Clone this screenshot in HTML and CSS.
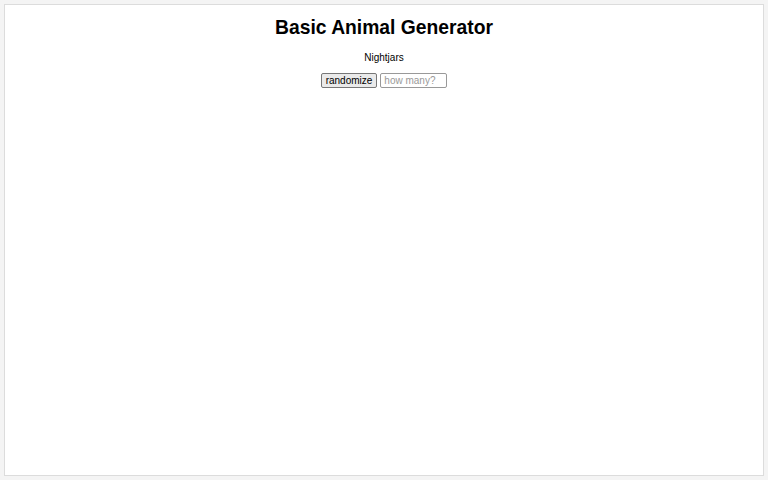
FILE: index.html
```html
<!DOCTYPE html>
<html>
<head>
<meta charset="utf-8">
<link rel="stylesheet" href="styles.css">
</head>
<body>
<div class="frame">
  <h1 class="title">Basic Animal Generator</h1>
  <p class="animal">Nightjars</p>
  <div class="controls">
    <button class="btn">randomize</button>
    <input class="count" type="text" placeholder="how many?">
  </div>
</div>
</body>
</html>
```

FILE: styles.css
```css
html, body {
  margin: 0;
  padding: 0;
}
body {
  background: #f4f4f4;
  padding: 4px;
  font-family: "Liberation Sans", Arial, sans-serif;
}
.frame {
  background: #fff;
  border: 1px solid #dcdcdc;
  height: 472px;
  box-sizing: border-box;
  text-align: center;
  padding-top: 13px;
}
.title {
  margin: 0;
  font-size: 19.3px;
  font-weight: bold;
  color: #000;
  line-height: 20px;
}
.animal {
  margin: 14px 0 0;
  font-size: 10px;
  line-height: 12px;
  color: #000;
}
.controls {
  margin-top: 9px;
  display: flex;
  justify-content: center;
  gap: 3px;
}
.btn {
  font-family: "Liberation Sans", Arial, sans-serif;
  font-size: 10px;
  height: 15px;
  padding: 0 4px;
  border: 1px solid #777;
  border-radius: 2px;
  background: #eaeaea;
  color: #000;
  line-height: 12px;
}
.count {
  font-family: "Liberation Sans", Arial, sans-serif;
  font-size: 10px;
  width: 67px;
  height: 15px;
  box-sizing: border-box;
  padding: 0 3px;
  border: 1px solid #999;
  border-radius: 2px;
}
.count::placeholder {
  color: #999;
}
```
